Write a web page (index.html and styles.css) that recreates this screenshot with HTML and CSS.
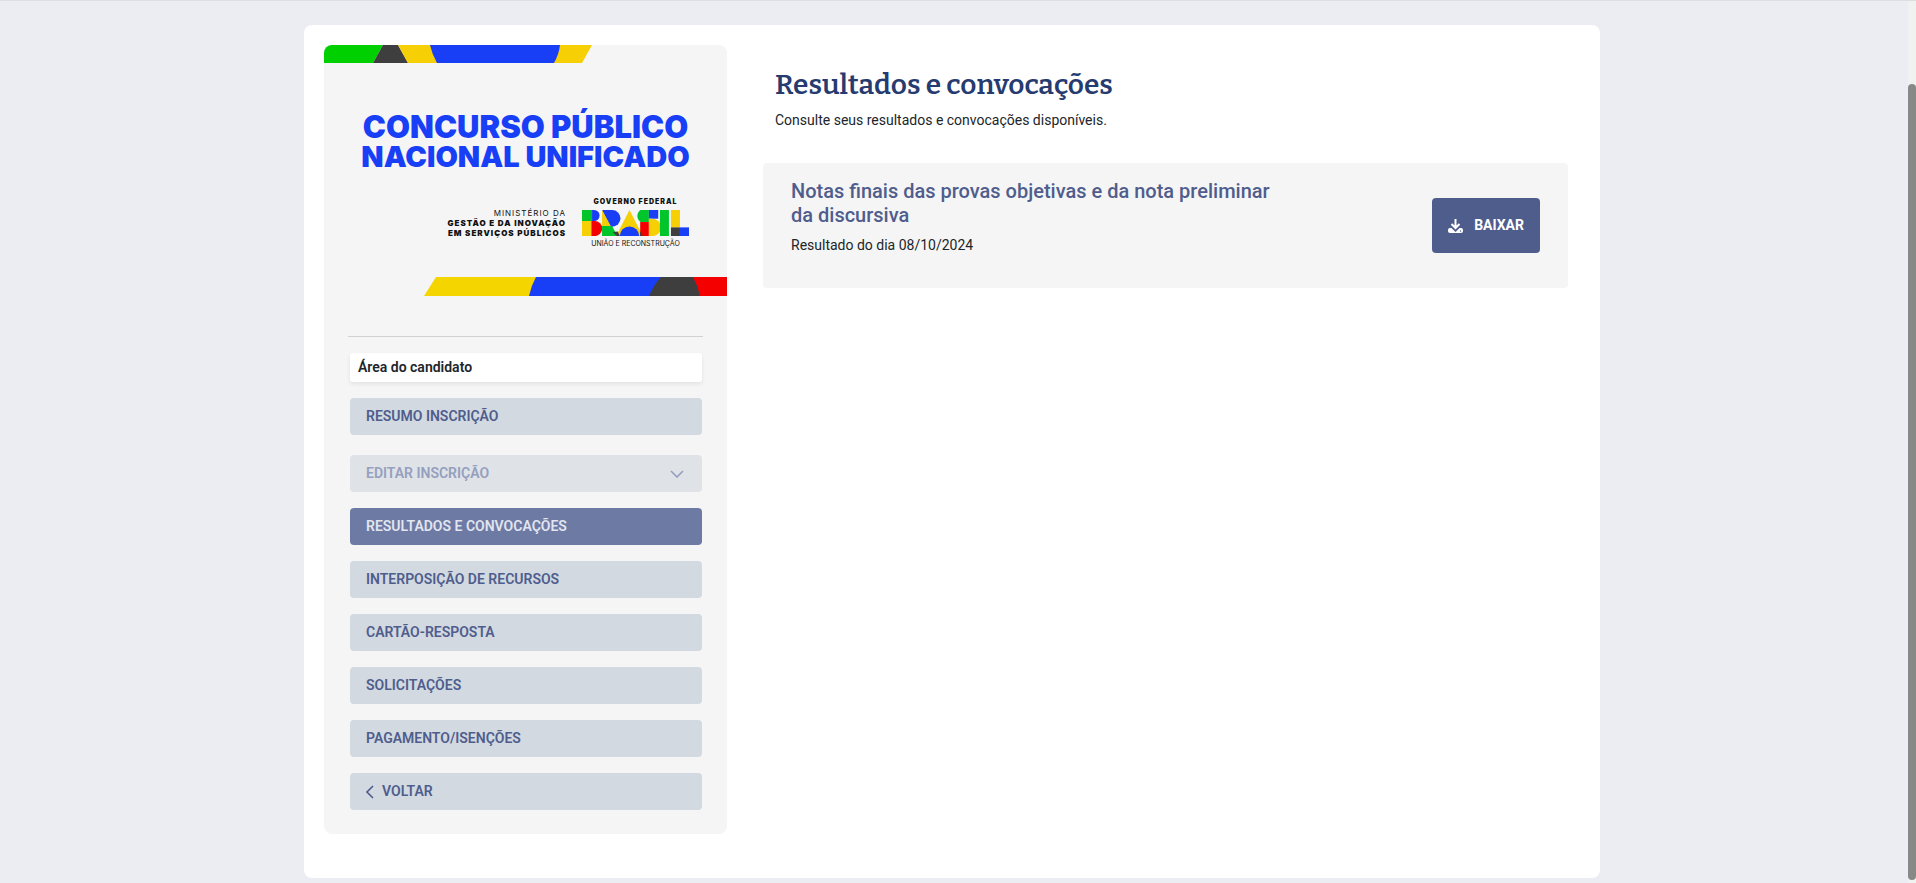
FILE: index.html
```
<!DOCTYPE html>
<html lang="pt-BR">

<head>
    <meta charset="UTF-8">
    <meta name="viewport" content="width=device-width, initial-scale=1.0">
    <title>Resultados e convocações</title>
    <link rel="stylesheet" href="styles.css">
</head>

<body>
    <div class="page">
        <div class="card">
            <aside class="sidebar">
                <div class="banner">
                    <svg class="faixa-topo" viewBox="0 0 403 18" aria-hidden="true">
                        <path fill="#00d000" d="M0 0h59l-10 18H0z" />
                        <path fill="#3e3e3e" d="M59 0h15l10 18H49z" />
                        <path fill="#f6cf05" d="M74 0h194l-10 18H84z" />
                        <path fill="#183ff5" d="M106 0h130q-1 9-6 18H113q-5-9-7-18z" />
                    </svg>
                    <div class="marca">
                        <p>CONCURSO PÚBLICO</p>
                        <p class="linha2">NACIONAL UNIFICADO</p>
                    </div>
                    <div class="governo">
                        <p class="ministerio">MINISTÉRIO DA<br><b>GESTÃO E DA INOVAÇÃO<br>EM SERVIÇOS PÚBLICOS</b></p>
                        <div class="federal">
                            <b>GOVERNO FEDERAL</b>
                            <svg class="brasil" viewBox="0 0 320 78" role="img" aria-label="Brasil">
                                <rect fill="#00c52b" width="30" height="33" />
                                <path fill="#183ff5" d="M30 0h6a16 16 0 0 1 0 33h-6z" />
                                <rect fill="#f6cf05" y="33" width="28" height="45" />
                                <path fill="#f50000" d="M28 33h10a22 22 0 0 1 0 45H28z" />
                                <path fill="#183ff5" d="M60 0h30a25 25 0 0 1 0 50H84z" />
                                <path fill="#f6cf05" d="M60 0l26 48H60z" />
                                <path fill="#00c52b" d="M60 48h30l16 30H60z" />
                                <path fill="#f6cf05" d="M142 0l40 78h-80z" />
                                <path fill="#183ff5" d="M113 78a29 29 0 0 1 58 0z" />
                                <path fill="#3e3e3e" d="M92 66l12 12h9l-6-14z" />
                                <path fill="#00c52b" d="M200 0v36h-25a18 18 0 0 1 25-36z" />
                                <rect fill="#183ff5" x="200" width="28" height="26" />
                                <rect fill="#f50000" x="174" y="36" width="26" height="42" />
                                <path fill="#3e3e3e" d="M174 62l8 16h-8z" />
                                <path fill="#f6cf05" d="M200 26h10a26 26 0 0 1 0 52h-10z" />
                                <rect fill="#00c52b" x="233" width="27" height="78" />
                                <rect fill="#f6cf05" x="266" width="27" height="52" />
                                <rect fill="#3e3e3e" x="266" y="52" width="27" height="26" />
                                <rect fill="#183ff5" x="293" y="52" width="27" height="26" />
                            </svg>
                            <span>UNIÃO E RECONSTRUÇÃO</span>
                        </div>
                    </div>
                    <svg class="faixa-base" viewBox="0 0 403 19" aria-hidden="true">
                        <path fill="#f5d500" d="M112 0h108l-14 19H100z" />
                        <path fill="#183ff5" d="M212 0h130l-14 19H205q2-10 7-19z" />
                        <path fill="#3e3e3e" d="M337 0h38l8 19h-58q4-10 12-19z" />
                        <path fill="#f50000" d="M369 0h34v19h-27q-2-10-7-19z" />
                    </svg>
                </div>
                <hr>
                <nav class="menu" aria-label="Área do candidato">
                    <h2>Área do candidato</h2>
                    <a class="item resumo" href="#">RESUMO INSCRIÇÃO</a>
                    <button class="item editar" type="button" disabled>
                        EDITAR INSCRIÇÃO
                        <svg width="14" height="8" viewBox="0 0 14 8" aria-hidden="true">
                            <path d="M1 1l6 6 6-6" />
                        </svg>
                    </button>
                    <a class="item ativo" href="#" aria-current="page">RESULTADOS E CONVOCAÇÕES</a>
                    <a class="item" href="#">INTERPOSIÇÃO DE RECURSOS</a>
                    <a class="item" href="#">CARTÃO-RESPOSTA</a>
                    <a class="item" href="#">SOLICITAÇÕES</a>
                    <a class="item" href="#">PAGAMENTO/ISENÇÕES</a>
                    <a class="item voltar" href="#">
                        <svg width="8" height="14" viewBox="0 0 8 14" aria-hidden="true">
                            <path d="M7 1L1 7l6 6" />
                        </svg>
                        VOLTAR
                    </a>
                </nav>
            </aside>
            <main class="conteudo">
                <header class="titulo">
                    <h1>Resultados e convocações</h1>
                    <p>Consulte seus resultados e convocações disponíveis.</p>
                </header>
                <section class="resultado">
                    <div class="texto">
                        <h3>Notas finais das provas objetivas e da nota preliminar da discursiva</h3>
                        <p>Resultado do dia 08/10/2024</p>
                    </div>
                    <button class="baixar" type="button">
                        <svg width="15" height="14" viewBox="0 0 15 14" aria-hidden="true">
                            <rect y="9" width="15" height="5" rx="2" fill="#fff" />
                            <path d="M3 6.5l4.5 4.5L12 6.5" fill="none" stroke="#4f5d8d" stroke-width="3" />
                            <path d="M7.5 0v9M3.500 5l4 4 4-4" fill="none" stroke="#fff" stroke-width="2" />
                            <circle cx="12.500" cy="12" r=".7" fill="#4f5d8d" />
                        </svg>
                        BAIXAR
                    </button>
                </section>
            </main>
        </div>
    </div>
    <div class="rolagem" aria-hidden="true"></div>
</body>

</html>
```
FILE: styles.css
```
* {
    margin: 0;
    padding: 0;
    box-sizing: border-box;
}

body {
    display: flex;
    min-height: 100vh;
    background-color: #ecedf2;
    border-top: 1px solid #dddee2;
    font-family: Roboto, "Liberation Sans", sans-serif;
    font-size: 14px;
    color: #212529;
}

.page {
    flex: 1;
    padding: 24px 16px 4px 12px;
}

/* barra de rolagem */
.rolagem {
    width: 8px;
    padding: 83px 0 3px;
    background-color: #f0f1f1;
    display: flex;
}

.rolagem::before {
    content: "";
    flex: 1;
    border-radius: 4px;
    background-color: #868987;
}

.card {
    display: flex;
    align-items: flex-start;
    max-width: 1296px;
    margin: 0 auto;
    padding: 20px 32px 44px 20px;
    background-color: #fff;
    border-radius: 8px;
}

/* menu lateral */
.sidebar {
    flex: 0 0 403px;
    padding-bottom: 24px;
    background-color: #f5f5f5;
    border-radius: 8px;
    overflow: hidden;
}

.banner svg {
    display: block;
}

.marca {
    padding: 49px 0 0;
    text-align: center;
    font-family: Inter, sans-serif;
    font-size: 31px;
    font-weight: 900;
    line-height: 30px;
    color: #183ff5;
    white-space: nowrap;
}

.marca .linha2 {
    font-size: 29px;
}

.governo {
    display: flex;
    justify-content: flex-end;
    align-items: center;
    gap: 16px;
    padding: 26px 38px 29px 0;
    font-family: Inter, sans-serif;
    color: #111;
}

.ministerio {
    font-size: 8px;
    line-height: 10px;
    text-align: right;
    letter-spacing: 1px;
}

.ministerio b,
.federal b {
    font-weight: 900;
}

.federal {
    width: 107px;
    text-align: center;
    font-size: 7px;
    line-height: 8px;
    white-space: nowrap;
}

.federal b,
.federal span {
    display: block;
}

.federal b {
    letter-spacing: 1px;
}

.brasil {
    width: 107px;
    margin: 4px 0;
}

hr {
    margin: 40px 24px 16px;
    border: 0;
    border-top: 1px solid #d0d1d3;
}

.menu {
    display: flex;
    flex-direction: column;
    gap: 16px;
    padding: 0 25px 0 26px;
}

.menu h2 {
    padding: 0 8px;
    font-size: 14px;
    font-weight: 600;
    line-height: 29px;
    background-color: #fff;
    border-radius: 3px;
    box-shadow: 0 2px 4px rgba(0, 0, 0, .08);
}

.item {
    display: flex;
    align-items: center;
    padding: 0 18px 0 16px;
    border: 0;
    border-radius: 4px;
    background-color: #d2d9e0;
    font-family: inherit;
    font-size: 14px;
    font-weight: 600;
    line-height: 37px;
    color: #4f5d8d;
    text-decoration: none;
}

.item svg {
    fill: none;
    stroke: currentColor;
    stroke-width: 1.6;
}

.resumo {
    margin-bottom: 4px;
}

.editar {
    justify-content: space-between;
    background-color: #dfe2e6;
    color: #959fbe;
}

.ativo {
    background-color: #6d7aa3;
    color: #e1e5f0;
}

.voltar {
    gap: 8px;
}

/* resultados */
.conteudo {
    flex: 1;
    padding-left: 36px;
}

.titulo {
    padding: 20px 12px 32px;
}

h1 {
    font-family: Bitter, "DejaVu Serif Condensed", "DejaVu Serif", serif;
    font-size: 28px;
    font-weight: 600;
    line-height: 40px;
    color: #263b70;
}

.titulo p {
    padding-top: 4px;
    line-height: 22px;
}

.resultado {
    display: flex;
    justify-content: space-between;
    align-items: center;
    padding: 0 28px;
    background-color: #f5f5f5;
    border-radius: 4px;
}

.texto {
    max-width: 490px;
    padding: 16px 0 32px;
}

h3 {
    font-size: 20px;
    font-weight: 500;
    line-height: 24px;
    color: #4f5d8d;
}

.texto p {
    padding-top: 8px;
    line-height: 21px;
}

.baixar {
    display: flex;
    align-items: center;
    gap: 11px;
    padding: 0 16px;
    border: 0;
    border-radius: 4px;
    background-color: #4f5d8d;
    font-family: inherit;
    font-size: 14px;
    font-weight: 700;
    line-height: 55px;
    color: #fff;
}
```
